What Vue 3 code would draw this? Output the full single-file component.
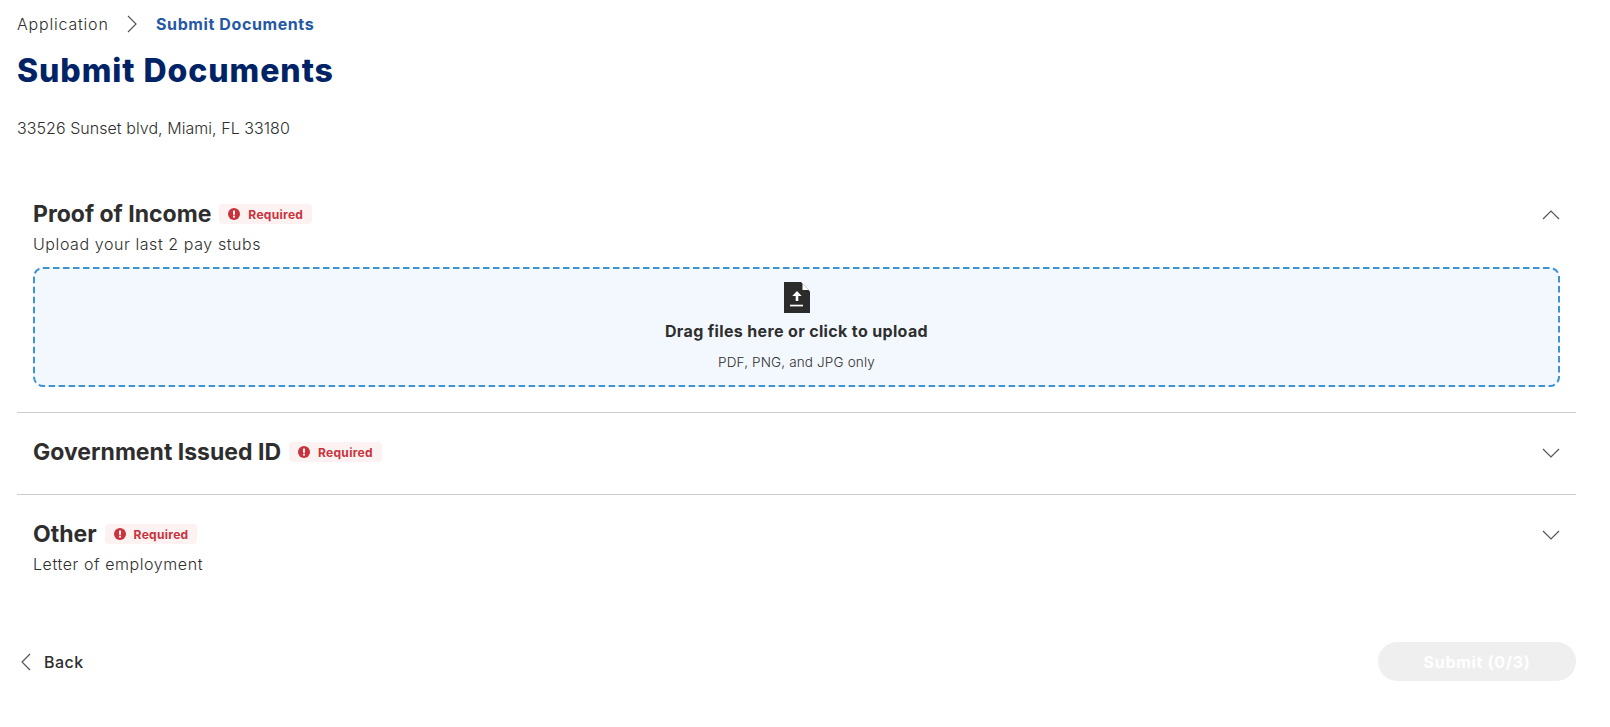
<script setup>
const sections = [
  { title: 'Proof of Income', sub: 'Upload your last 2 pay stubs', open: true },
  { title: 'Government Issued ID', sub: '', open: false },
  { title: 'Other', sub: 'Letter of employment', open: false },
]
</script>

<template>
  <div class="page">
    <nav class="crumbs">
      <span class="crumb">Application</span>
      <svg class="crumb-sep" width="12" height="18" viewBox="0 0 12 18"><path d="M2 1l8 8-8 8" /></svg>
      <span class="crumb-current">Submit Documents</span>
    </nav>
    <h1 class="title">Submit Documents</h1>
    <p class="address">33526 Sunset blvd, Miami, FL 33180</p>

    <section v-for="s in sections" :key="s.title" class="section">
      <div class="head">
        <div class="head-left">
          <div class="title-row">
            <h2 class="sec-title">{{ s.title }}</h2>
            <span class="badge">
              <svg width="12" height="12" viewBox="0 0 12 12"><circle cx="6" cy="6" r="6" fill="#c9333b" /><rect x="5" y="2.4" width="2" height="4.4" rx=".6" fill="#fff" /><circle cx="6" cy="8.7" r="1.1" fill="#fff" /></svg>
              Required
            </span>
          </div>
          <p v-if="s.sub" class="sub">{{ s.sub }}</p>
        </div>
        <svg class="chev" width="18" height="10" viewBox="0 0 18 10"><path :d="s.open ? 'M1 9l8-8 8 8' : 'M1 1l8 8 8-8'" /></svg>
      </div>
      <div v-if="s.open" class="drop">
        <svg class="dash" aria-hidden="true"><rect class="dash-rect" x="1" y="1" rx="9" ry="9" /></svg>
        <svg class="file" width="26" height="31" viewBox="0 0 26 31">
          <path d="M0 0H17L26 9.500V31H0Z" fill="#2b2b2b" />
          <path d="M18.500 1.500L24.500 8H18.500Z" fill="#fff" />
          <path d="M13 9L17.700 14H14.300V19H11.700V14H8.300Z" fill="#fff" />
          <rect x="6" y="22.700" width="13" height="1.700" fill="#fff" />
        </svg>
        <div class="drop-main">Drag files here or click to upload</div>
        <div class="drop-note">PDF, PNG, and JPG only</div>
      </div>
    </section>

    <footer class="foot">
      <button class="back">
        <svg width="12" height="18" viewBox="0 0 12 18"><path d="M10 1L2 9l8 8" /></svg>
        Back
      </button>
      <button class="submit" disabled>Submit (0/3)</button>
    </footer>
  </div>
</template>

<style scoped>
.page {
  width: 1559px;
  margin-left: 17px;
  font-family: Inter, "Noto Sans", sans-serif;
  color: #2e2e2e;
}
.crumbs { display: flex; align-items: center; height: 24px; padding-top: 12px; font-size: 16px; }
.crumb { width: 92px; letter-spacing: .8px; font-weight: 300; white-space: nowrap; }
.crumb-sep { margin: 0 18px 0 17px; }
.crumb-sep path, .chev path, .back path { fill: none; stroke: #555; stroke-width: 1.200; }
.crumb-current { font-weight: 700; color: #2458a6; letter-spacing: .6px; }
.title { margin: 13px 0 0; font-size: 32px; line-height: 44px; font-weight: 800; color: #002366; letter-spacing: .95px; }
.address { margin: 23px 0 0; font-size: 16px; line-height: 24px; font-weight: 300; letter-spacing: .05px; }
.section { padding: 0 16px 0; border-bottom: 1px solid #ccc; }
.section:first-of-type { margin-top: 58px; padding-bottom: 25px; }
.section:nth-of-type(2) { padding-top: 23px; padding-bottom: 26px; }
.section:last-of-type { border-bottom: 0; padding-top: 23px; }
.head { display: flex; justify-content: space-between; align-items: flex-start; }
.head-left { display: flex; flex-direction: column; }
.title-row { display: flex; align-items: center; gap: 8px; height: 32px; }
.sec-title { margin: 0; font-size: 23px; font-weight: 700; line-height: 32px; }
.badge {
  display: inline-flex; align-items: center; gap: 8px;
  height: 20px; padding: 0 9px;
  background: #fdf2f2; border-radius: 4px;
  color: #c9333b; font-size: 12px; font-weight: 700; letter-spacing: .3px;
}
.chev { margin-top: 12px; }
.sub { margin: 2px 0 0; font-size: 16px; line-height: 24px; font-weight: 300; letter-spacing: .58px; }
.drop {
  position: relative;
  margin-top: 11px;
  height: 120px;
  box-sizing: border-box;
  border-radius: 10px;
  background: #f3f8fe;
  display: flex; flex-direction: column; align-items: center;
  padding-top: 15px;
}
.dash { position: absolute; inset: 0; width: 100%; height: 100%; }
.dash-rect {
  width: calc(100% - 2px); height: calc(100% - 2px);
  fill: none; stroke: #3d94d1; stroke-width: 2; stroke-dasharray: 6.500 3.500;
}
.file { position: relative; }
.drop-main { position: relative; margin-top: 6px; font-size: 16px; font-weight: 700; line-height: 24px; letter-spacing: .35px; }
.drop-note { position: relative; margin-top: 9px; font-size: 13.500px; line-height: 20px; font-weight: 300; letter-spacing: .15px; }
.foot { display: flex; justify-content: space-between; align-items: center; margin-top: 66px; }
.back {
  display: flex; align-items: center; gap: 12px;
  background: none; border: 0; padding: 0 0 0 3px;
  font: 500 16px Inter, sans-serif; color: #2e2e2e; letter-spacing: .5px;
}
.submit {
  width: 198px; height: 39px; border: 0; border-radius: 20px;
  background: #efefef; color: #fff;
  font: 700 16px Inter, sans-serif; letter-spacing: .7px;
}
</style>
